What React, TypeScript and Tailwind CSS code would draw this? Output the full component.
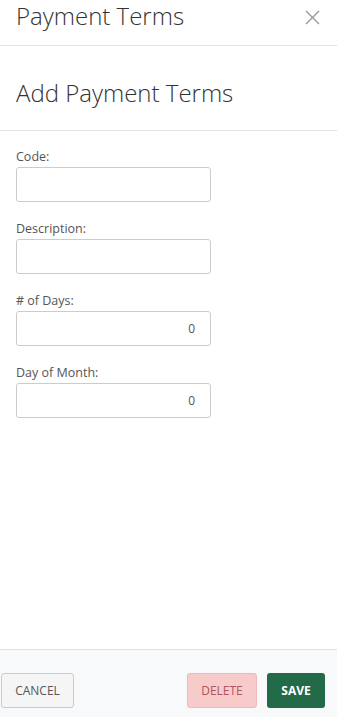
import React from "react";

const fields = [
  { label: "Code:", value: "", numeric: false },
  { label: "Description:", value: "", numeric: false },
  { label: "# of Days:", value: "0", numeric: true },
  { label: "Day of Month:", value: "0", numeric: true },
];

export default function App() {
  return (
    <div
      className="flex h-[717px] w-[337px] flex-col bg-white text-[#333]"
      style={{ fontFamily: '"Open Sans", "Noto Sans", sans-serif' }}
    >
      <div className="flex h-[46px] shrink-0 items-start justify-between border-b border-[#dee2e6] pl-4 pr-[17px] pt-[4px]">
        <h1 className="text-[24px] font-light leading-none text-[#333]">Payment Terms</h1>
        <button className="mt-[6px] text-[#999]">
          <svg width="15" height="15" viewBox="0 0 15 15" fill="none" stroke="currentColor" strokeWidth="1.4">
            <path d="M1 1L14 14M14 1L1 14" />
          </svg>
        </button>
      </div>
      <div className="flex h-[85px] shrink-0 items-start border-b border-[#dee2e6] pl-4 pt-[35px]">
        <h2 className="text-[24px] font-light leading-none text-[#333]">Add Payment Terms</h2>
      </div>
      <div className="flex flex-1 flex-col gap-[18px] px-4 pt-[17px]">
        {fields.map((f) => (
          <div key={f.label} className="flex flex-col">
            <label className="mb-[2px] h-[17px] text-[12.5px] leading-[17px] text-[#555]">{f.label}</label>
            <input
              readOnly
              value={f.value}
              className={`h-[35px] w-[195px] rounded-[3px] border border-[#ccc] bg-white px-3 text-[12px] text-[#555] outline-none ${f.numeric ? "text-right pr-[15px]" : ""}`}
            />
          </div>
        ))}
      </div>
      <div className="flex h-[68px] shrink-0 items-start justify-between border-t border-[#dee2e6] bg-[#f8f9fa] pl-px pr-[12px] pt-[23px]">
        <button className="h-[35px] w-[73px] rounded-[3px] border border-[#ccc] bg-[#f5f5f5] text-[12px] text-[#555]">CANCEL</button>
        <div className="flex gap-[10px]">
          <button className="h-[35px] w-[70px] rounded-[3px] border border-[#f0b8b8] bg-[#f8cbcb] text-[12px] text-[#b0545b]">DELETE</button>
          <button className="h-[35px] w-[58px] rounded-[3px] bg-[#236a48] text-[12px] font-bold text-white">SAVE</button>
        </div>
      </div>
    </div>
  );
}
